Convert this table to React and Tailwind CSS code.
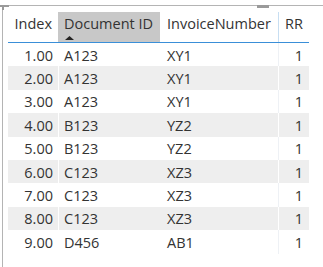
import React from 'react';

const rows = [
    { index: '1.00', doc: 'A123', invoice: 'XY1', rr: 1 },
    { index: '2.00', doc: 'A123', invoice: 'XY1', rr: 1 },
    { index: '3.00', doc: 'A123', invoice: 'XY1', rr: 1 },
    { index: '4.00', doc: 'B123', invoice: 'YZ2', rr: 1 },
    { index: '5.00', doc: 'B123', invoice: 'YZ2', rr: 1 },
    { index: '6.00', doc: 'C123', invoice: 'XZ3', rr: 1 },
    { index: '7.00', doc: 'C123', invoice: 'XZ3', rr: 1 },
    { index: '8.00', doc: 'C123', invoice: 'XZ3', rr: 1 },
    { index: '9.00', doc: 'D456', invoice: 'AB1', rr: 1 },
];

export default function App() {
    return (
        <div
            className="relative w-[323px] h-[267px] overflow-hidden bg-white text-[#333333]"
            style={{ fontFamily: '"Open Sans", "Noto Sans", sans-serif' }}
        >
            {/* Visual frame */}
            <div className="mt-[5px] ml-[2px] h-[262px] border-t border-l border-[#b4b4b4] pl-[5px] pt-[6px]">
                <div className="w-[301px] text-[14.5px] leading-[20px]">
                    {/* Header */}
                    <div className="flex h-[31px] border-b border-[#3a8fd8]">
                        <div className="w-[50px] pt-[2px] pr-[6px] text-right">Index</div>
                        <div className="w-[102px] bg-[#c8c8c8] pt-[2px] pl-[6px]">
                            <div>Document ID</div>
                            <svg width="9" height="4" viewBox="0 0 9 4" className="mt-[2px] ml-[1px] block">
                                <polygon points="0,4 4.5,0 9,4" fill="#252423" />
                            </svg>
                        </div>
                        <div className="w-[118px] pt-[2px] pl-[7px]">InvoiceNumber</div>
                        <div className="w-[31px] border-l border-[#c7def2] pt-[2px] pl-[6px]">RR</div>
                    </div>

                    {/* Body */}
                    {rows.map((row, i) => (
                        <div
                            key={i}
                            className={`flex h-[23.4px] ${i % 2 === 1 ? 'bg-[#eeeeee]' : 'bg-white'}`}
                        >
                            <div className="w-[50px] flex items-center justify-end pt-[2px] pr-[5px]">{row.index}</div>
                            <div className="w-[102px] flex items-center pt-[2px] pl-[5px] border-l border-white">{row.doc}</div>
                            <div className="w-[118px] flex items-center pt-[2px] pl-[7px]">{row.invoice}</div>
                            <div className={`w-[31px] flex items-center justify-end pt-[2px] pr-[6px] border-l ${i % 2 === 1 ? 'border-white' : 'border-[#eef1f5]'}`}>{row.rr}</div>
                        </div>
                    ))}
                </div>
            </div>

            {/* Corner and edge handles */}
            <div className="absolute left-0 top-[5px] w-[9px] h-[2px] bg-[#9a9a9a]" />
            <div className="absolute left-[2px] top-[5px] w-[2px] h-[5px] bg-[#9a9a9a]" />
            <div className="absolute left-[257px] top-[5px] w-[12px] h-[3px] bg-[#9a9a9a]" />
        </div>
    );
}
